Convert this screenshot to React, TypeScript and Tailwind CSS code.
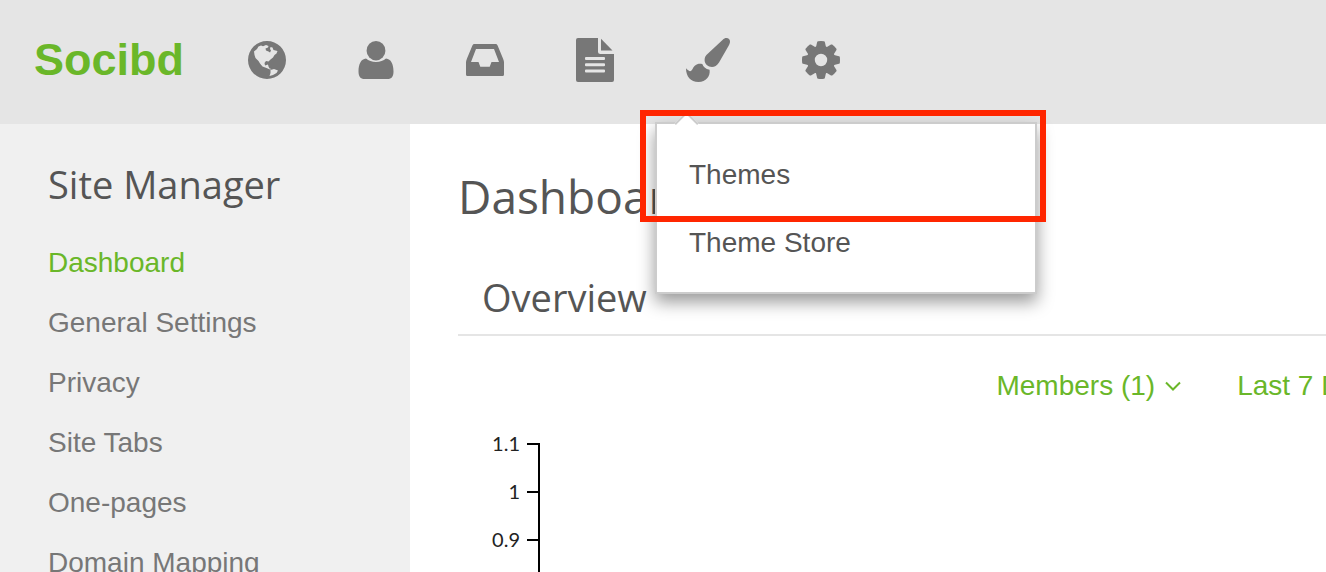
import type { ReactNode } from 'react'

interface NavItem {
  label: string
  icon: ReactNode
  menu?: string[]
}

function GlobeIcon() {
  return (
    <svg width="38" height="38" viewBox="0 0 38 38" fill="currentColor" aria-hidden="true">
      <path
        fillRule="evenodd"
        d="M19 0a19 19 0 1 0 0 38a19 19 0 1 0 0-38z
          M6 10.500L9 8L10.500 5.500L13 4.500L15 5.200L18 4L20.500 5L20 6.500L17.500 7.500L18 9.500L20.500 10.500L22 11.500L23 9.500L22 8L22.500 6L24.500 6.500L25.500 9L29.500 10L28.500 12.500L26.500 14L25 16.500L22.500 18.500L20.500 20.500L18 20L16.500 22L17 24.500L20 23.500L20.500 25.500L21.500 27.500L23.500 28L22 28.600L18.500 27L14.500 25.500L12 22.500L10.500 20L7.500 17L6.500 14z
          M22.500 29L26 28L30 29.500L28.500 32L25 34L21.500 35L22.500 32z"
      />
    </svg>
  )
}

function UserIcon() {
  return (
    <svg width="36" height="38" viewBox="0 0 35 38" fill="currentColor" aria-hidden="true">
      <ellipse cx="17.500" cy="9.700" rx="9.400" ry="9.700" />
      <path d="M7.500 17.500C2.500 18 0 23 0 30.500C0 35.500 2 38 6 38H29C33 38 35 35.500 35 30.500C35 23 32.500 18 27.500 17.500C25 19.500 21.500 21 17.500 21S10 19.500 7.500 17.500z" />
    </svg>
  )
}

function InboxIcon() {
  return (
    <svg width="38" height="32" viewBox="0 0 38 32" fill="currentColor" aria-hidden="true">
      <path
        fillRule="evenodd"
        d="M8.500 0H29.500Q31 0 31.600 1.400L37 14.500Q38 17 38 18.500V30.500Q38 32 36.500 32H1.500Q0 32 0 30.500V18.500Q0 17 1 14.500L6.400 1.400Q7 0 8.500 0z
          M10 5L5 18H12.500L14.300 22.700H23.700L25.500 18H33L28 5z"
      />
    </svg>
  )
}

function DocumentIcon() {
  return (
    <svg width="38" height="44" viewBox="0 0 38 44" fill="currentColor" aria-hidden="true">
      <path
        fillRule="evenodd"
        d="M2 0H22V13.500Q22 16 24.500 16H38V42Q38 44 36 44H2Q0 44 0 42V2Q0 0 2 0z
          M10 19Q9 19 9 20V21Q9 22 10 22H28Q29 22 29 21V20Q29 19 28 19z
          M10 25.300Q9 25.300 9 26.300V27.300Q9 28.300 10 28.300H28Q29 28.300 29 27.300V26.300Q29 25.300 28 25.300z
          M10 31.600Q9 31.600 9 32.600V33.600Q9 34.600 10 34.600H28Q29 34.600 29 33.600V32.600Q29 31.600 28 31.600z"
      />
      <path d="M25 .7L36.500 12.500H25z" />
    </svg>
  )
}

function BrushIcon() {
  return (
    <svg width="44" height="44" viewBox="0 0 44 44" fill="currentColor" aria-hidden="true">
      <path d="M40.500 0C42.500 0 44 1.500 44 3.500C44 5 43.500 6 42.500 8L33 24.500C31 27.500 28.500 29 26 29C22 29 18.600 26 18.600 22C18.600 19.500 19.500 17.500 22 15.500L36.500 2C38 .6 39 0 40.500 0z" />
      <path d="M16.500 26.200C17 28.500 19.500 31 23.600 31.800C24.500 38.500 20 44 12.500 44C4.500 44 0 38.500 0 30.300C2 32.500 3.500 33.500 5 33C6.500 32 6.500 30 8.500 28C11 25.800 14 25.500 16.500 26.200z" />
    </svg>
  )
}

const gearAngles = [0, 45, 90, 135, 180, 225, 270, 315]

function GearIcon() {
  return (
    <svg width="38" height="38" viewBox="0 0 38 38" fill="currentColor" aria-hidden="true">
      <circle cx="19" cy="19" r="10.200" fill="none" stroke="currentColor" strokeWidth="8" />
      {gearAngles.map((angle) => (
        <path
          key={angle}
          d="M13.500 8L15.200 1Q15.400 .3 16 .2Q19 -.2 22 .2Q22.600 .3 22.800 1L24.500 8z"
          transform={`rotate(${angle} 19 19)`}
        />
      ))}
    </svg>
  )
}

function ChevronDown() {
  return (
    <svg width="16" height="10" viewBox="0 0 16 10" fill="none" stroke="currentColor" strokeWidth="2" aria-hidden="true">
      <path d="M1 1.500L8 8.500L15 1.500" />
    </svg>
  )
}

const navItems: NavItem[] = [
  { label: 'Site', icon: <GlobeIcon /> },
  { label: 'Users', icon: <UserIcon /> },
  { label: 'Inbox', icon: <InboxIcon /> },
  { label: 'Content', icon: <DocumentIcon /> },
  { label: 'Design', icon: <BrushIcon />, menu: ['Themes', 'Theme Store'] },
  { label: 'Settings', icon: <GearIcon /> },
]

const sideLinks = [
  'Dashboard',
  'General Settings',
  'Privacy',
  'Site Tabs',
  'One-pages',
  'Domain Mapping',
]

const axisTicks = ['1.1', '1', '0.9']

function NavMenu({ items }: { items: string[] }) {
  return (
    <div className="absolute top-[84px] -left-[31px] z-10 w-[382px] border-2 border-[#ccc] bg-white pt-[17px] pb-[15px] shadow-[0_8px_16px_rgba(0,0,0,0.4)]">
      {/* Pointer */}
      <div className="absolute -top-[9px] left-[21px] size-[17px] rotate-45 border-t-2 border-l-2 border-[#ccc] bg-white" />
      <ul className="relative">
        {items.map((item) => (
          <li key={item}>
            <a href="#" className="block px-8 py-4 text-[28px] leading-9 text-[#555]">
              {item}
            </a>
          </li>
        ))}
      </ul>
      {/* Highlight around the first entry */}
      <div className="pointer-events-none absolute -top-[14px] -left-[17px] h-[112px] w-[406px] border-6 border-[#ff2600]" />
    </div>
  )
}

function TopBar() {
  return (
    <header className="flex h-[124px] shrink-0 items-center bg-[#e5e5e5] pr-9 pb-1 pl-[34px]">
      <a href="#" className="w-[214px] text-[45px] leading-[56px] font-bold text-[#6ab729]">
        Socibd
      </a>
      <nav className="flex items-center gap-[72px] text-[#777]">
        {navItems.map(({ label, icon, menu }) => (
          <div key={label} className="relative">
            <button type="button" aria-label={label} className="block cursor-pointer">
              {icon}
            </button>
            {menu && <NavMenu items={menu} />}
          </div>
        ))}
      </nav>
    </header>
  )
}

function Sidebar() {
  return (
    <aside className="w-[410px] shrink-0 bg-[#f0f0f0] px-12 pt-9">
      <h2 className="font-['Open_Sans','Noto_Sans',sans-serif] text-[38px] leading-[48px] text-[#555]">
        Site Manager
      </h2>
      <ul className="mt-[25px]">
        {sideLinks.map((link, i) => (
          <li key={link}>
            <a
              href="#"
              className={`block text-[28px] leading-[60px] ${i === 0 ? 'text-[#6ab729]' : 'text-[#777]'}`}
            >
              {link}
            </a>
          </li>
        ))}
      </ul>
    </aside>
  )
}

function Chart() {
  return (
    <div className="mt-[15px] flex pl-6">
      <div className="w-[38px] text-right font-['Lato',sans-serif] text-[20px] leading-[48px] text-[#222]">
        {axisTicks.map((tick) => (
          <div key={tick}>{tick}</div>
        ))}
      </div>
      <svg width="14" height="240" viewBox="0 0 14 240" className="ml-1.5" stroke="#000" strokeWidth="2" aria-hidden="true">
        <path d="M13 240V24" fill="none" />
        {axisTicks.map((tick, i) => (
          <path key={tick} d={`M1 ${25 + i * 48}H14`} />
        ))}
      </svg>
    </div>
  )
}

export default function App() {
  return (
    <div className="flex h-screen flex-col overflow-hidden bg-white font-['Liberation_Sans',Arial,sans-serif]">
      <TopBar />
      <div className="flex flex-1">
        <Sidebar />
        <main className="min-w-0 flex-1 pt-[42px] pl-12">
          <h1 className="font-['Open_Sans','Noto_Sans',sans-serif] text-[46px] leading-[60px] text-[#555]">
            Dashboard
          </h1>
          <h2 className="mt-9 border-b-2 border-[#e5e5e5] pb-0.5 pl-6 font-['Open_Sans','Noto_Sans',sans-serif] text-[38px] leading-[70px] text-[#555]">
            Overview
          </h2>
          <div className="-mr-[85px] mt-8 flex justify-end gap-14 text-[28px] leading-9 whitespace-nowrap text-[#6ab729]">
            <button type="button" className="flex cursor-pointer items-center gap-2.5">
              Members (1)
              <ChevronDown />
            </button>
            <button type="button" className="flex cursor-pointer items-center gap-2.5">
              Last 7 Days
              <ChevronDown />
            </button>
          </div>
          <Chart />
        </main>
      </div>
    </div>
  )
}
